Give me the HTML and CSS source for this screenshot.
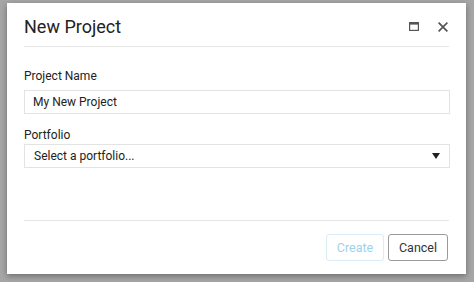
FILE: index.html
```html
<!DOCTYPE html>
<html>
<head>
<meta charset="utf-8">
<link rel="stylesheet" href="styles.css">
</head>
<body>
<div class="dialog">
  <div class="header">
    <h1 class="title">New Project</h1>
    <div class="tools">
      <svg class="icon" width="10" height="9" viewBox="0 0 10 9"><rect x="0.6" y="0.6" width="8.8" height="7.8" fill="none" stroke="#555" stroke-width="1.2"/><rect x="0.6" y="0.6" width="8.8" height="2" fill="#555"/></svg>
      <svg class="icon" width="10" height="10" viewBox="0 0 10 10"><path d="M1.2 1.2 L8.8 8.8 M8.8 1.2 L1.2 8.8" stroke="#555" stroke-width="1.7" stroke-linecap="square"/></svg>
    </div>
  </div>
  <div class="body">
    <label class="label first">Project Name</label>
    <div class="field">My New Project</div>
    <label class="label second">Portfolio</label>
    <div class="field select">
      <span>Select a portfolio...</span>
      <svg width="8" height="6" viewBox="0 0 8 6"><path d="M0 0 H8 L4 6 Z" fill="#222"/></svg>
    </div>
  </div>
  <div class="footer">
    <button class="btn create">Create</button>
    <button class="btn cancel">Cancel</button>
  </div>
</div>
</body>
</html>
```
FILE: styles.css
```css
html, body {
  margin: 0;
  height: 100%;
}
body {
  background: #a6a6a6;
  padding: 3px 0 0 7px;
  box-sizing: border-box;
  font-family: Roboto, "Liberation Sans", sans-serif;
  color: #222;
}
.dialog {
  width: 459px;
  height: 271px;
  background: #fff;
  box-shadow: 0 2px 6px rgba(0,0,0,0.35);
  padding: 0 17px;
  box-sizing: border-box;
  display: flex;
  flex-direction: column;
}
.header {
  height: 44px;
  border-bottom: 1px solid #e6e6e6;
  display: flex;
  align-items: center;
  justify-content: space-between;
  box-sizing: border-box;
  padding-top: 4px;
}
.title {
  margin: 0;
  font-size: 18px;
  font-weight: 400;
  color: #222;
  line-height: 22px;
}
.tools {
  display: flex;
  align-items: center;
  gap: 19px;
  padding-right: 1px;
}
.icon { display: block; }
.body {
  flex: 1;
  display: flex;
  flex-direction: column;
  border-bottom: 1px solid #e6e6e6;
}
.label {
  font-size: 12px;
  line-height: 16px;
  color: #222;
}
.label.first { margin-top: 21px; margin-bottom: 6px; }
.label.second { margin-top: 13px; margin-bottom: 1px; }
.field {
  height: 24px;
  border: 1px solid #e3e3e3;
  box-sizing: border-box;
  width: 426px;
  font-size: 12px;
  line-height: 22px;
  padding: 0 8px;
  color: #222;
}
.select {
  display: flex;
  align-items: center;
  justify-content: space-between;
  padding: 0 9px 0 9px;
}
.select svg { display: block; }
.footer {
  height: 53px;
  display: flex;
  justify-content: flex-end;
  align-items: flex-start;
  padding-top: 13px;
  gap: 4px;
  padding-right: 1px;
  box-sizing: border-box;
}
.btn {
  height: 27px;
  font-family: Roboto, "Liberation Sans", sans-serif;
  font-size: 12.5px;
  border-radius: 3px;
  background: #fff;
  padding: 0;
}
.create {
  width: 58px;
  border: 1px solid #d8edf6;
  color: #9dd2ea;
}
.cancel {
  width: 60px;
  border: 1px solid #9a9a9a;
  color: #333;
}
```
